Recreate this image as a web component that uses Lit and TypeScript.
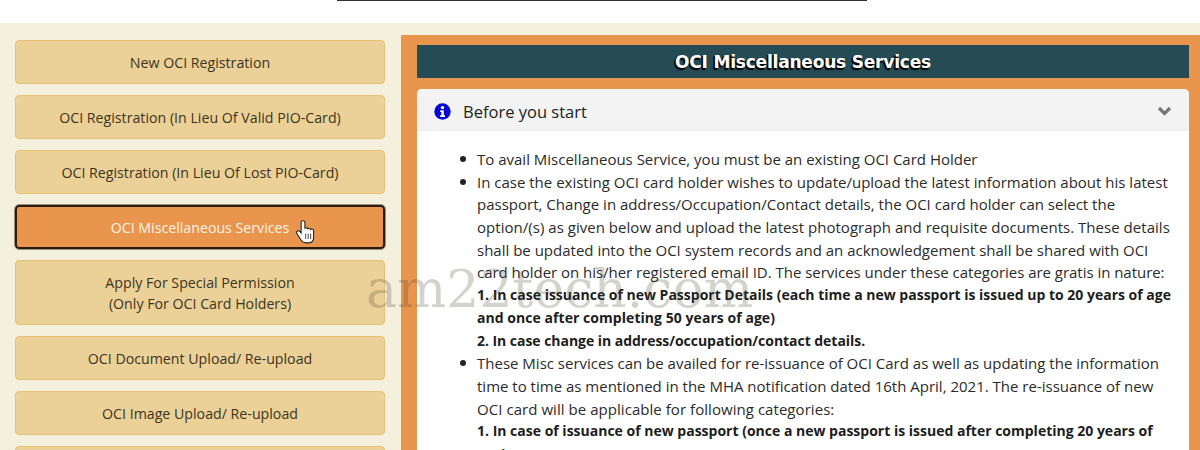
import { LitElement, html, css, svg } from "lit";
import { customElement } from "lit/decorators.js";

const hand = svg`<path d="M6.2 1.6c-1 0-1.7.8-1.7 1.8v9.4l-1.3-1.3c-.9-.9-2.2-.7-2.7.1-.4.7-.2 1.4.3 2.2l3.6 5.6c1 1.6 2.4 2.6 4.6 2.6h2.4c2.9 0 4.6-2 4.6-4.9v-6.1c0-1-.7-1.7-1.6-1.7-.4 0-.8.1-1.1.4-.2-.8-.9-1.2-1.6-1.2-.5 0-.9.2-1.2.5-.3-.6-.9-1-1.5-1-.4 0-.7.1-1 .3V3.4c0-1-.8-1.8-1.7-1.8z" fill="#fff" stroke="#222" stroke-width="1"/><path d="M8.7 13.5v5M11 13.5v5M13.3 13.5v5" stroke="#444" stroke-width=".9" fill="none"/>`;

type Kind = "bul" | "txt" | "b";
const LINES: [string, Kind, number][] = [
  ["To avail Miscellaneous Service, you must be an existing OCI Card Holder", "bul", 0.0],
  ["In case the existing OCI card holder wishes to update/upload the latest information about his latest", "bul", 0],
  ["passport, Change in address/Occupation/Contact details, the OCI card holder can select the", "txt", 0.01],
  ["option/(s) as given below and upload the latest photograph and requisite documents. These details", "txt", 0.03],
  ["shall be updated into the OCI system records and an acknowledgement shall be shared with OCI", "txt", 0],
  ["card holder on his/her registered email ID. The services under these categories are gratis in nature:", "txt", -0.03],
  ["1. In case issuance of new Passport Details (each time a new passport is issued up to 20 years of age", "b", 0],
  ["and once after completing 50 years of age)", "b", 0.05],
  ["2. In case change in address/occupation/contact details.", "b", -0.04],
  ["These Misc services can be availed for re-issuance of OCI Card as well as updating the information", "bul", 0],
  ["time to time as mentioned in the MHA notification dated 16th April, 2021. The re-issuance of new", "txt", 0],
  ["OCI card will be applicable for following categories:", "txt", 0.05],
  ["1. In case of issuance of new passport (once a new passport is issued after completing 20 years of", "b", 0],
  ["age)", "b", 0],
];

@customElement("app-root")
export class AppRoot extends LitElement {
  static styles = css`
    :host { display: block; width: 1200px; height: 450px; overflow: hidden; position: relative; background: #fff;
      font-family: "Open Sans", "Noto Sans", sans-serif; color: #212529; }
    .topline { width: 530px; height: 1px; background: #333; margin-left: 337px; }
    .top-gap { height: 22px; }
    .main { display: flex; background: #f3f1dd; height: 427px; align-items: flex-start; }
    .side { width: 401px; flex: none; padding: 17px 16px 0 15px; box-sizing: border-box; display: flex; flex-direction: column; gap: 11px; }
    .btn { height: 44px; flex: none; box-sizing: border-box; background: #ebd198; border: 1px solid #e8c074; border-radius: 4px;
      display: flex; flex-direction: column; align-items: center; justify-content: center; font-size: 14.2px; line-height: 21px; color: #3d3420; padding-top: 1px; }
    .btn.tall { height: 65px; }
    .btn.active { background: #e9954e; color: #fdf3e4; border: 2px solid #2a1c10; outline: 1px solid #9b8f80; position: relative; }
    .cursor { position: absolute; left: 279px; top: 12px; width: 20px; height: 26px; }
    .panel { flex: 1; height: 415px; margin-top: 12px; background: #e9954e; padding: 10px 11px 0 16px; box-sizing: border-box; }
    .title { height: 33px; background: #254b55; color: #fff; display: flex; align-items: center; justify-content: center;
      font-family: "DejaVu Sans", sans-serif; font-weight: 700; font-size: 17px; letter-spacing: -0.2px; text-shadow: -1.5px 1px 0 #000, -1px 1.5px 1px #000; }
    .card { margin-top: 11px; background: #fff; border-radius: 5px 5px 0 0; height: 400px; overflow: hidden; }
    .head { height: 42px; box-sizing: border-box; padding: 3px 17px 0; background: #f3f3f3; display: flex; align-items: center; gap: 12px; font-size: 16.5px; font-weight: 500; color: #222; border-bottom: 1px solid #eee; }
    .head .label { flex: 1; }
    .body { padding: 17px 0 0 60px; font-size: 15px; line-height: 22.7px; color: #2b2b2b; white-space: nowrap; }
    .line { display: block; height: 22.7px; }
    .bul { position: relative; }
    .bul::before { content: ""; position: absolute; left: -17px; top: 8px; width: 6px; height: 6px; border-radius: 50%; background: #222; }
    .b { font-weight: 700; color: #1d1d1d; font-size: 14px; }
    .wm { position: absolute; left: 366px; top: 259px; font-family: "DejaVu Serif", serif; font-size: 52px; line-height: 60px; color: rgba(70, 70, 50, 0.24); pointer-events: none; white-space: nowrap; }
  `;

  render() {
    const items = [
      "New OCI Registration",
      "OCI Registration (In Lieu Of Valid PIO-Card)",
      "OCI Registration (In Lieu Of Lost PIO-Card)",
    ];
    return html`
      <div class="topline"></div>
      <div class="top-gap"></div>
      <div class="main">
        <div class="side">
          ${items.map((t) => html`<div class="btn">${t}</div>`)}
          <div class="btn active"><span>OCI Miscellaneous Services</span>
            <svg class="cursor" viewBox="0 0 18 24">${hand}</svg></div>
          <div class="btn tall"><span>Apply For Special Permission</span><span>(Only For OCI Card Holders)</span></div>
          <div class="btn">OCI Document Upload/ Re-upload</div>
          <div class="btn">OCI Image Upload/ Re-upload</div>
          <div class="btn"></div>
        </div>
        <div class="panel">
          <div class="title">OCI Miscellaneous Services</div>
          <div class="card">
            <div class="head">
              <svg width="17" height="17" viewBox="0 0 17 17"><circle cx="8.5" cy="8.5" r="8.2" fill="#0505d8"/><circle cx="8.5" cy="4.6" r="1.7" fill="#fff"/><path d="M6.2 7.2h3.6v5h1.2v1.9H6.2v-1.9h1.2V9.1H6.2z" fill="#fff"/></svg>
              <span class="label">Before you start</span>
              <svg width="15" height="10" viewBox="0 0 15 10"><path d="M2 2l5.5 5.5L13 2" fill="none" stroke="#777" stroke-width="3.2"/></svg>
            </div>
            <div class="body">
              ${LINES.map(([t, k, ls]) => html`<span class="line ${k}" style="letter-spacing:${ls}px">${t}</span>`)}
            </div>
          </div>
        </div>
      </div>
      <div class="wm">am22tech.com</div>
    `;
  }
}
